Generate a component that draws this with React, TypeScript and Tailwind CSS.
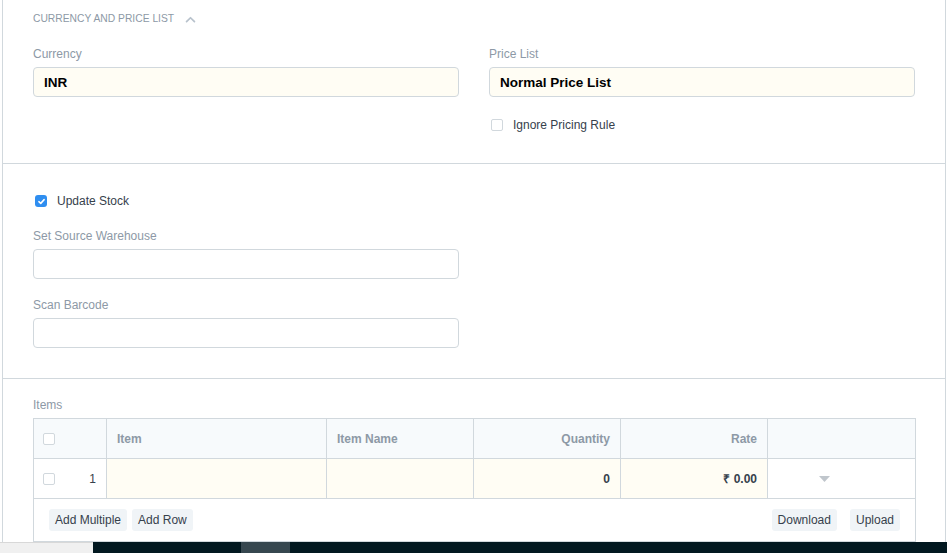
import { ReactNode } from "react"

const font = { fontFamily: '"Liberation Sans", Arial, sans-serif' }

function Box({ checked = false }: { checked?: boolean }) {
    if (checked) {
        return (
            <span className="flex h-[12px] w-[12px] items-center justify-center rounded-[3px] bg-[#2f8ef0]">
                <svg viewBox="0 0 12 12" className="h-[9px] w-[9px]" fill="none" stroke="white" strokeWidth="2" strokeLinecap="round" strokeLinejoin="round">
                    <polyline points="2.5,6.2 5,8.5 9.5,3.5" />
                </svg>
            </span>
        )
    }
    return <span className="block h-[12px] w-[12px] rounded-[2px] border border-[#d1d8dd] bg-white" />
}

function Label({ children }: { children: ReactNode }) {
    return <div className="h-[16px] text-[12px] leading-[16px] text-[#8d99a6]">{children}</div>
}

function Input({ value, bold = false }: { value?: string; bold?: boolean }) {
    return (
        <div className={`mt-[5px] flex h-[30px] items-center rounded-[4px] border border-[#d1d8dd] px-[10px] pt-[3px] text-[13.5px] font-bold text-black ${bold ? "bg-[#fffdf4]" : "bg-white"}`}>
            {value}
        </div>
    )
}

function Btn({ children }: { children: ReactNode }) {
    return (
        <button className="h-[22px] rounded-[3px] bg-[#f0f4f7] px-[6px] text-[12px] leading-[22px] text-[#36414c]">
            {children}
        </button>
    )
}

export default function App() {
    return (
        <div className="h-[553px] w-[947px] overflow-hidden bg-white" style={font}>
            <div className="ml-[2px] h-[542px] w-[944px] overflow-hidden border-x border-[#d1d8dd]">
                {/* currency and price list */}
                <section className="border-b border-[#d1d8dd] px-[30px] pt-[12px] pb-[30px]">
                    <div className="flex h-[14px] items-center gap-[11px] text-[10.3px] leading-[14px] text-[#8d99a6]">
                        <span>CURRENCY AND PRICE LIST</span>
                        <svg viewBox="0 0 12 8" className="h-[7px] w-[11px]" fill="none" stroke="#b8c2cc" strokeWidth="2" strokeLinecap="round" strokeLinejoin="round">
                            <polyline points="1.5,6.5 6,2 10.5,6.5" />
                        </svg>
                    </div>
                    <div className="mt-[20px] grid grid-cols-2 gap-x-[30px]">
                        <div>
                            <Label>Currency</Label>
                            <Input value="INR" bold />
                        </div>
                        <div>
                            <Label>Price List</Label>
                            <Input value="Normal Price List" bold />
                            <div className="mt-[20px] flex h-[16px] items-center gap-[10px] pl-[2px] text-[12px] text-[#36414c]">
                                <Box />
                                <span>Ignore Pricing Rule</span>
                            </div>
                        </div>
                    </div>
                </section>

                {/* stock */}
                <section className="border-b border-[#d1d8dd] px-[30px] pt-[29px] pb-[30px]">
                    <div className="flex h-[16px] items-center gap-[10px] pl-[2px] text-[12px] text-[#36414c]">
                        <Box checked />
                        <span>Update Stock</span>
                    </div>
                    <div className="grid grid-cols-2 gap-x-[30px]">
                        <div>
                            <div className="mt-[19px]">
                                <Label>Set Source Warehouse</Label>
                                <Input />
                            </div>
                            <div className="mt-[18px]">
                                <Label>Scan Barcode</Label>
                                <Input />
                            </div>
                        </div>
                    </div>
                </section>

                {/* items */}
                <section className="px-[30px] pt-[18px]">
                    <Label>Items</Label>
                    <div className="mt-[5px] w-[883px] border border-[#d1d8dd] text-[12px]">
                        <div className="grid h-[40px] grid-cols-[73px_220px_147px_147px_147px_1fr] border-b border-[#d1d8dd] bg-[#f7fafc] font-bold text-[#8d99a6]">
                            <div className="flex items-center border-r border-[#d1d8dd] pl-[9px]">
                                <Box />
                            </div>
                            <div className="flex items-center border-r border-[#d1d8dd] pl-[10px]">Item</div>
                            <div className="flex items-center border-r border-[#d1d8dd] pl-[10px]">Item Name</div>
                            <div className="flex items-center justify-end border-r border-[#d1d8dd] pr-[10px]">Quantity</div>
                            <div className="flex items-center justify-end border-r border-[#d1d8dd] pr-[10px]">Rate</div>
                            <div />
                        </div>
                        <div className="grid h-[40px] grid-cols-[73px_220px_147px_147px_147px_1fr] border-b border-[#d1d8dd]">
                            <div className="flex items-center justify-between border-r border-[#d1d8dd] pr-[10px] pl-[9px] text-[#36414c]">
                                <Box />
                                <span>1</span>
                            </div>
                            <div className="border-r border-[#d1d8dd] bg-[#fffdf4]" />
                            <div className="border-r border-[#d1d8dd] bg-[#fffdf4]" />
                            <div className="flex items-center justify-end border-r border-[#d1d8dd] bg-[#fffdf4] pr-[10px] font-bold text-[#36414c]">0</div>
                            <div className="flex items-center justify-end border-r border-[#d1d8dd] bg-[#fffdf4] pr-[10px] font-bold text-[#36414c]">₹ 0.00</div>
                            <div className="flex items-center pl-[51px]">
                                <svg viewBox="0 0 11 6" className="h-[6px] w-[11px]">
                                    <polygon points="0,0 11,0 5.5,6" fill="#c0c6cc" />
                                </svg>
                            </div>
                        </div>
                        <div className="flex h-[42px] items-start justify-between px-[15px] pt-[10px]">
                            <div className="flex gap-[5px]">
                                <Btn>Add Multiple</Btn>
                                <Btn>Add Row</Btn>
                            </div>
                            <div className="flex gap-[13px]">
                                <Btn>Download</Btn>
                                <Btn>Upload</Btn>
                            </div>
                        </div>
                    </div>
                </section>
            </div>

            {/* bottom strip */}
            <div className="flex h-[11px]">
                <div className="w-[93px] border-t border-[#d8d8d8] bg-[#f0f0f0]" />
                <div className="w-[148px] bg-[#021820]" />
                <div className="w-[49px] bg-[#36474f]" />
                <div className="flex-1 bg-[#021820]" />
            </div>
        </div>
    )
}
